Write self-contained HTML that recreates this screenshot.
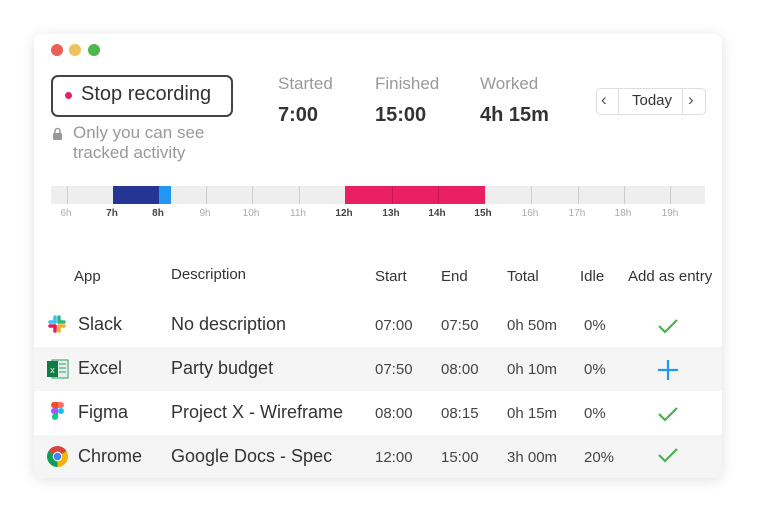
<!DOCTYPE html>
<html><head><style>
body{margin:0;width:768px;height:520px;background:#fff;font-family:"Liberation Sans",sans-serif;position:relative;overflow:hidden}
.a{position:absolute;white-space:nowrap}
.card{position:absolute;left:34px;top:34px;width:688px;height:444px;background:#fff;border-radius:8px;box-shadow:0 2px 14px rgba(0,0,0,.12);overflow:hidden}
.dot{position:absolute;top:44px;width:12px;height:12px;border-radius:50%}
.lbl{color:#999;font-size:17px}
.val{color:#333;font-size:20px;font-weight:bold}
.tl{position:absolute;top:208px;font-size:10px;color:#aaa;transform:translateX(-50%)}
.tl.b{color:#444;font-weight:bold}
.tk{position:absolute;top:186px;width:1px;height:18px;background:#ccc}
.h{font-size:15px;color:#333;top:268px}
.row{position:absolute;left:34px;width:688px;height:44px}
.c{font-size:15px;color:#444}
.big{font-size:18px;color:#333}
</style></head><body>
<div class="card"></div>
<div class="dot" style="left:51px;background:#ec5f55"></div>
<div class="dot" style="left:69px;background:#eec15a"></div>
<div class="dot" style="left:88px;background:#4cb94a"></div>
<div class="a" style="left:51px;top:75px;width:178px;height:38px;border:2px solid #444;border-radius:7px"></div>
<div class="a" style="left:65px;top:92px;width:7px;height:7px;border-radius:50%;background:#e91e63"></div>
<div class="a" style="left:81px;top:83px;font-size:20px;color:#333">Stop recording</div>
<svg class="a" style="left:52px;top:127px" width="11" height="13"><path d="M3 6V4a2.5 2.5 0 0 1 5 0v2" stroke="#999" stroke-width="1.5" fill="none"/><rect x="1" y="6" width="9" height="7" rx="1" fill="#999"/></svg>
<div class="a lbl" style="left:73px;top:123px;line-height:20px">Only you can see<br>tracked activity</div>
<div class="a lbl" style="left:278px;top:74px">Started</div>
<div class="a val" style="left:278px;top:104px">7:00</div>
<div class="a lbl" style="left:375px;top:74px">Finished</div>
<div class="a val" style="left:375px;top:104px">15:00</div>
<div class="a lbl" style="left:480px;top:74px">Worked</div>
<div class="a val" style="left:480px;top:104px">4h 15m</div>
<div class="a" style="left:596px;top:88px;width:108px;height:25px;border:1px solid #ddd;border-radius:5px"></div>
<div class="a" style="left:618px;top:88px;width:1px;height:27px;background:#ddd"></div>
<div class="a" style="left:682px;top:88px;width:1px;height:27px;background:#ddd"></div>
<div class="a" style="left:601px;top:90px;font-size:17px;color:#555">‹</div>
<div class="a" style="left:632px;top:92px;font-size:15px;color:#333">Today</div>
<div class="a" style="left:688px;top:90px;font-size:17px;color:#555">›</div>
<div class="a" style="left:51px;top:186px;width:654px;height:18px;background:#eee"></div>
<div class="a" style="left:113px;top:186px;width:46px;height:18px;background:#253593"></div>
<div class="a" style="left:159px;top:186px;width:12px;height:18px;background:#2196f3"></div>
<div class="a" style="left:345px;top:186px;width:140px;height:18px;background:#e91e63"></div>
<div class="tk" style="left:67px"></div><div class="tk" style="left:206px"></div><div class="tk" style="left:252px"></div><div class="tk" style="left:299px"></div>
<div class="tk" style="left:392px;background:#c8184f"></div><div class="tk" style="left:438px;background:#c8184f"></div>
<div class="tk" style="left:531px"></div><div class="tk" style="left:578px"></div><div class="tk" style="left:624px"></div><div class="tk" style="left:670px"></div>
<div class="tl" style="left:66px">6h</div><div class="tl b" style="left:112px">7h</div><div class="tl b" style="left:158px">8h</div><div class="tl" style="left:205px">9h</div><div class="tl" style="left:251px">10h</div><div class="tl" style="left:298px">11h</div><div class="tl b" style="left:344px">12h</div><div class="tl b" style="left:391px">13h</div><div class="tl b" style="left:437px">14h</div><div class="tl b" style="left:483px">15h</div><div class="tl" style="left:530px">16h</div><div class="tl" style="left:577px">17h</div><div class="tl" style="left:623px">18h</div><div class="tl" style="left:670px">19h</div>
<div class="a h" style="left:74px">App</div><div class="a h" style="left:171px;top:266px">Description</div><div class="a h" style="left:375px">Start</div><div class="a h" style="left:441px">End</div><div class="a h" style="left:507px">Total</div><div class="a h" style="left:580px">Idle</div><div class="a h" style="left:628px">Add as entry</div>
<div class="row" style="top:347px;background:#f5f5f5"></div>
<div class="row" style="top:435px;background:#f5f5f5;height:43px;border-radius:0 0 8px 8px"></div>
<svg class="a" style="left:47px;top:314px" width="20" height="20"><g stroke-linecap="round" stroke-width="3.5"><path d="M8 3v5" stroke="#36c5f0"/><path d="M3 8h5" stroke="#36c5f0"/><path d="M17 8h-5" stroke="#2eb67d"/><path d="M12 3v5" stroke="#2eb67d"/><path d="M12 17v-5" stroke="#ecb22e"/><path d="M17 12h-5" stroke="#ecb22e"/><path d="M3 12h5" stroke="#e01e5a"/><path d="M8 17v-5" stroke="#e01e5a"/></g></svg>
<div class="a big" style="left:78px;top:314px">Slack</div><div class="a big" style="left:171px;top:314px">No description</div>
<div class="a c" style="left:375px;top:317px">07:00</div><div class="a c" style="left:441px;top:317px">07:50</div><div class="a c" style="left:507px;top:317px">0h 50m</div><div class="a c" style="left:584px;top:317px">0%</div>
<svg class="a" style="left:657px;top:317px" width="22" height="18"><path d="M2 9l6 6L20 3" stroke="#4caf50" stroke-width="2.2" fill="none"/></svg>
<svg class="a" style="left:47px;top:359px" width="22" height="20"><rect x="5" y="1" width="16" height="18" fill="#e8efe9" stroke="#21a366"/><path d="M12 5h7M12 9h7M12 13h7" stroke="#21a366"/><rect x="0" y="2" width="11" height="16" fill="#107c41"/><text x="5.5" y="14" font-size="9" fill="#fff" text-anchor="middle" font-family="Liberation Sans">x</text></svg>
<div class="a big" style="left:78px;top:358px">Excel</div><div class="a big" style="left:171px;top:358px">Party budget</div>
<div class="a c" style="left:375px;top:361px">07:50</div><div class="a c" style="left:441px;top:361px">08:00</div><div class="a c" style="left:507px;top:361px">0h 10m</div><div class="a c" style="left:584px;top:361px">0%</div>
<svg class="a" style="left:657px;top:359px" width="22" height="22"><path d="M11 1v20M1 11h20" stroke="#2196f3" stroke-width="2.2"/></svg>
<svg class="a" style="left:51px;top:402px" width="14" height="20"><path d="M3 0h4v6H3a3 3 0 0 1 0-6z" fill="#f24e1e"/><path d="M7 0h3a3 3 0 0 1 0 6H7z" fill="#ff7262"/><path d="M3 6h4v6H3a3 3 0 0 1 0-6z" fill="#a259ff"/><circle cx="10" cy="9" r="3" fill="#1abcfe"/><path d="M3 12h4v3a3 3 0 1 1-4-3z" fill="#0acf83"/></svg>
<div class="a big" style="left:78px;top:402px">Figma</div><div class="a big" style="left:171px;top:402px">Project X - Wireframe</div>
<div class="a c" style="left:375px;top:405px">08:00</div><div class="a c" style="left:441px;top:405px">08:15</div><div class="a c" style="left:507px;top:405px">0h 15m</div><div class="a c" style="left:584px;top:405px">0%</div>
<svg class="a" style="left:657px;top:405px" width="22" height="18"><path d="M2 9l6 6L20 3" stroke="#4caf50" stroke-width="2.2" fill="none"/></svg>
<svg class="a" style="left:47px;top:446px" width="21" height="21" viewBox="-10 -10 20 20"><path d="M0 0L-8.66-5A10 10 0 0 1 8.66-5z" fill="#db4437"/><path d="M0 0L8.66-5A10 10 0 0 1 0 10z" fill="#f4b400"/><path d="M0 0L0 10A10 10 0 0 1-8.66-5z" fill="#0f9d58"/><circle r="4.6" fill="#fff"/><circle r="3.6" fill="#4285f4"/></svg>
<div class="a big" style="left:78px;top:446px">Chrome</div><div class="a big" style="left:171px;top:446px">Google Docs - Spec</div>
<div class="a c" style="left:375px;top:449px">12:00</div><div class="a c" style="left:441px;top:449px">15:00</div><div class="a c" style="left:507px;top:449px">3h 00m</div><div class="a c" style="left:584px;top:449px">20%</div>
<svg class="a" style="left:657px;top:446px" width="22" height="18"><path d="M2 9l6 6L20 3" stroke="#4caf50" stroke-width="2.2" fill="none"/></svg>
</body></html>
